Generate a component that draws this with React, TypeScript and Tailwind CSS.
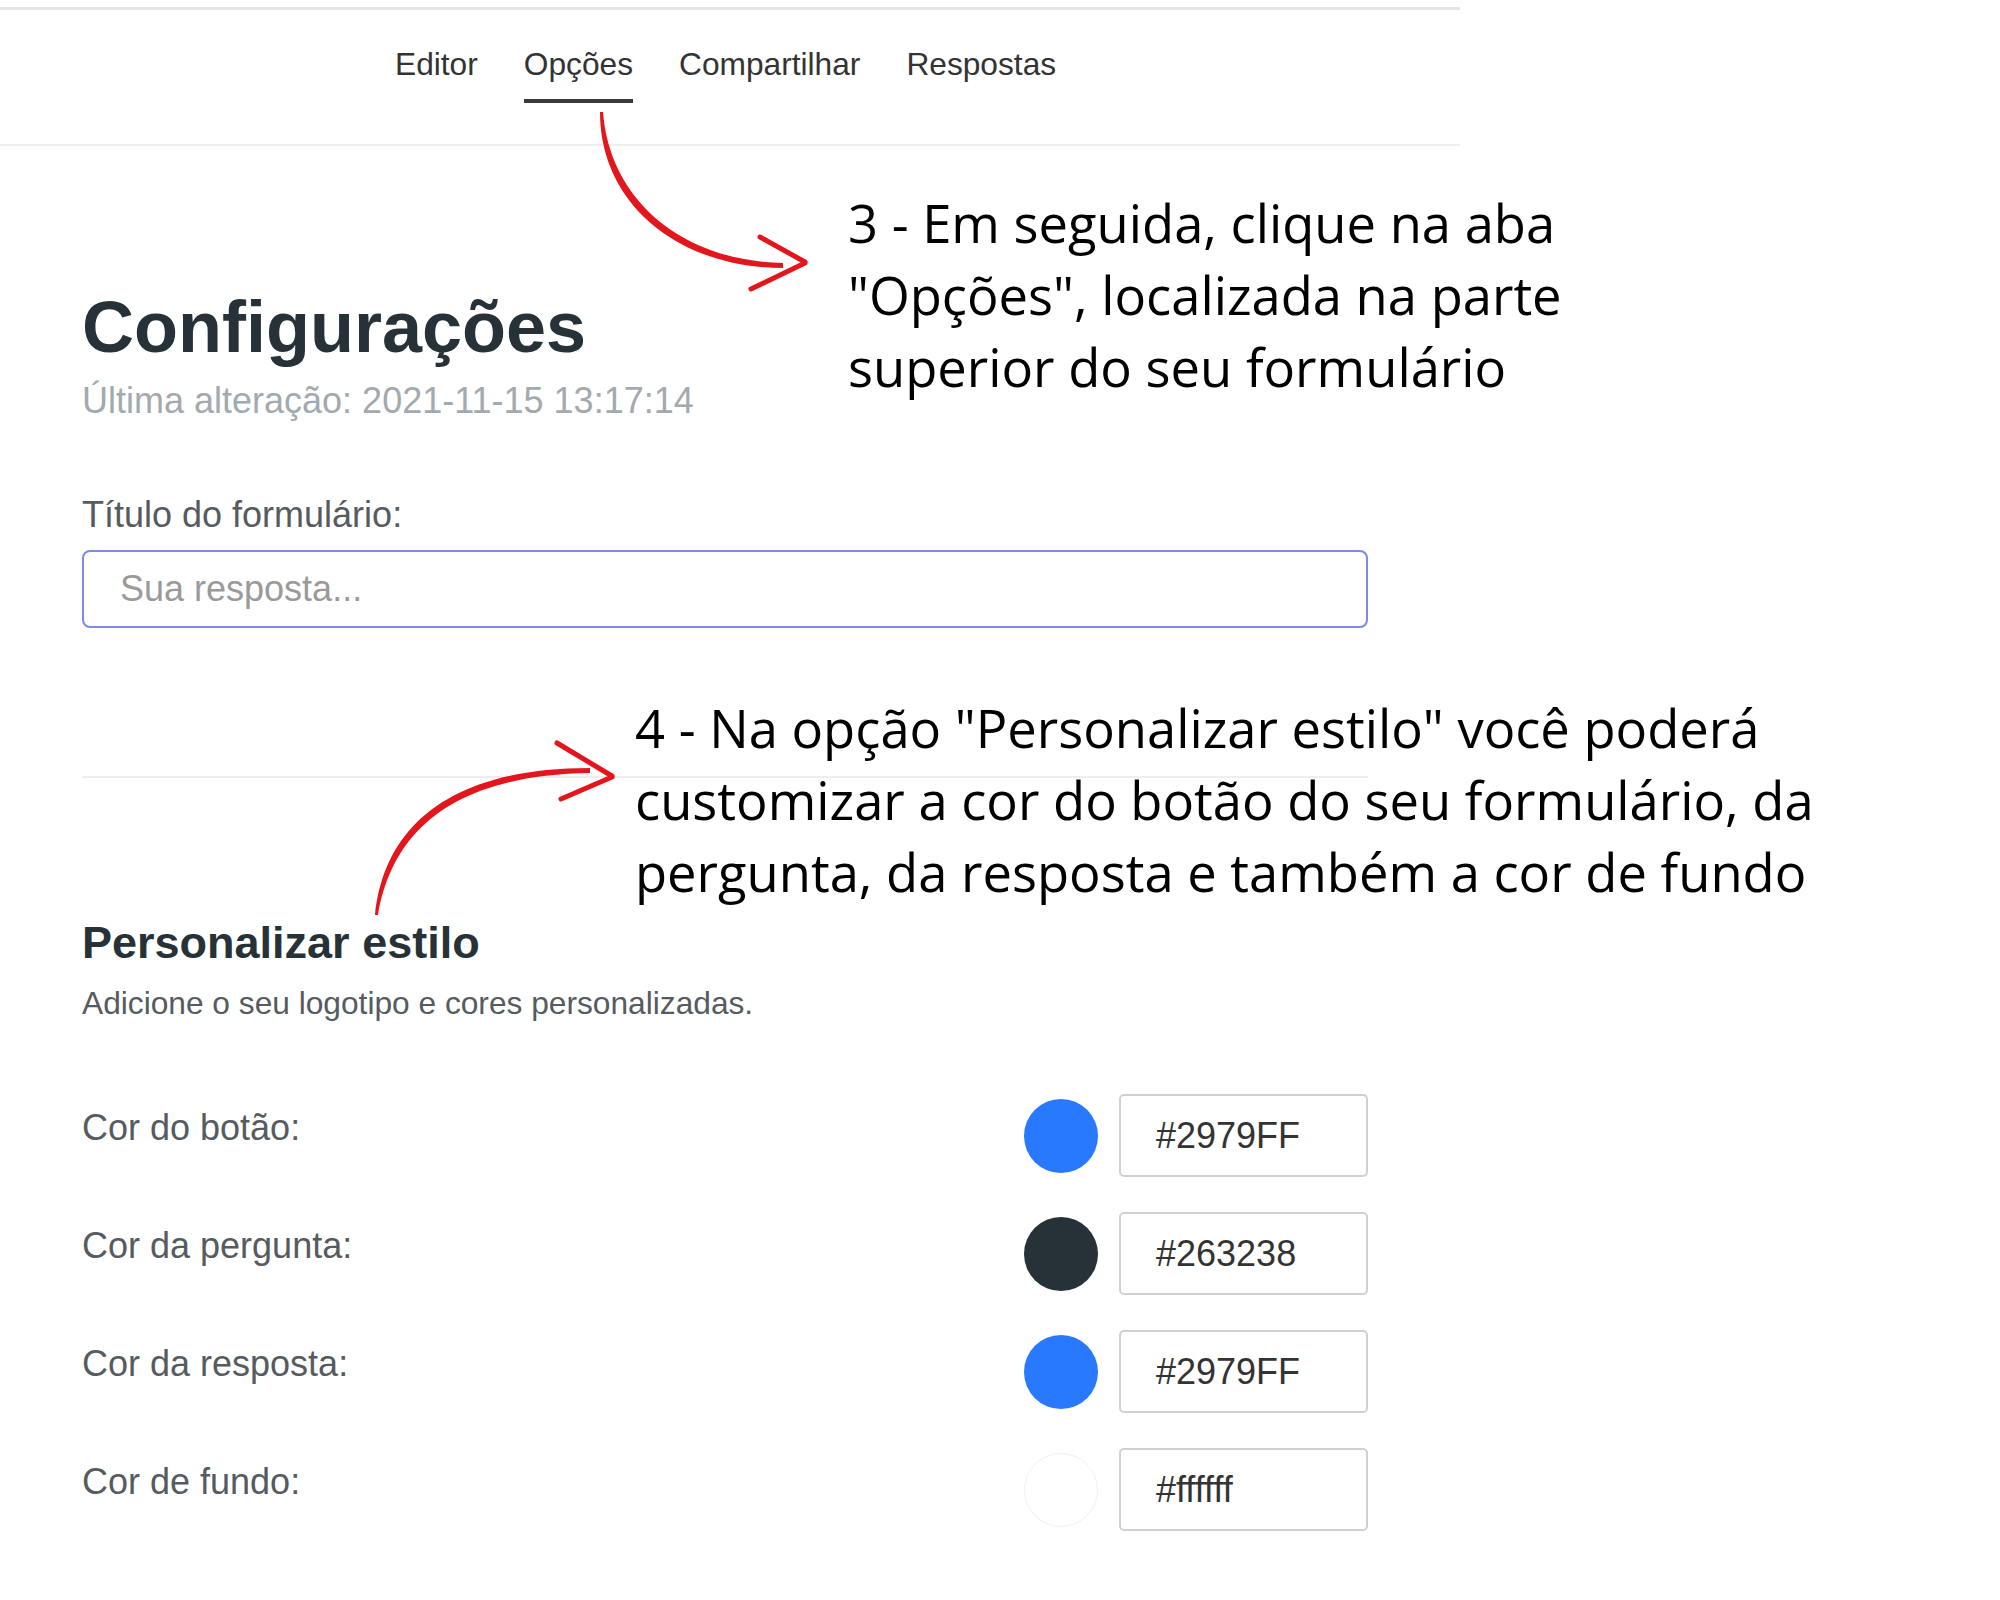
const tabs = ['Editor', 'Opções', 'Compartilhar', 'Respostas']

const colorRows = [
  { label: 'Cor do botão:', value: '#2979FF', swatch: 'bg-[#2979ff]' },
  { label: 'Cor da pergunta:', value: '#263238', swatch: 'bg-[#263238]' },
  { label: 'Cor da resposta:', value: '#2979FF', swatch: 'bg-[#2979ff]' },
  { label: 'Cor de fundo:', value: '#ffffff', swatch: 'bg-white border border-[#f1f1f1]' },
]

const RED = '#e3161d'

// hand drawn arrows that sit on top of the form
const Arrows = () => (
  <svg
    className="pointer-events-none absolute left-0 top-0"
    width="2000"
    height="1600"
    viewBox="0 0 2000 1600"
  >
    {/* arrow 3: from the tab down to the first note */}
    <path
      d="M600,112 C600,205 680,268 783,268 L783,263 C684,261 610,202 603,112 Z"
      fill={RED}
    />
    <path d="M760,237 L805,262" stroke={RED} strokeWidth="5" strokeLinecap="round" fill="none" />
    <path d="M751,289 L805,263" stroke={RED} strokeWidth="5" strokeLinecap="round" fill="none" />

    {/* arrow 4: from the section title up to the second note */}
    <path
      d="M375,915 C384,828 448,768 590,768 L590,773 C452,775 392,832 378,915 Z"
      fill={RED}
    />
    <path d="M557,743 L612,776" stroke={RED} strokeWidth="5" strokeLinecap="round" fill="none" />
    <path d="M561,799 L612,777" stroke={RED} strokeWidth="5" strokeLinecap="round" fill="none" />
  </svg>
)

export default function App() {
  return (
    <div className="relative h-[1600px] w-[2000px] overflow-hidden bg-white font-['Liberation_Sans',Arial,sans-serif]">
      <header className="mt-[7px] w-[1460px] border-t-[3px] border-b-2 border-t-[#e4e4e4] border-b-[#efefef]">
        <nav className="flex h-[134px] items-start gap-[46px] pl-[395px] pt-[36px]">
          {tabs.map((tab) => (
            <a
              key={tab}
              className={
                tab === 'Opções'
                  ? 'block border-b-4 border-[#3a3a3a] pb-[16px] text-[31.7px] leading-[37px] text-[#333]'
                  : 'block pb-[16px] text-[31.7px] leading-[37px] text-[#333]'
              }
            >
              {tab}
            </a>
          ))}
        </nav>
      </header>

      <main className="w-[1368px] pl-[82px]">
        <h1 className="mt-[145px] text-[72px] font-bold leading-none text-[#263238]">
          Configurações
        </h1>
        <p className="mt-[17px] text-[36px] leading-[41px] text-[#a2a9af]">
          Última alteração: 2021-11-15 13:17:14
        </p>

        <label className="mt-[73px] block text-[36px] leading-[41px] text-[#555b60]">
          Título do formulário:
        </label>
        <div className="mt-[15px] flex h-[78px] items-center rounded-lg border-2 border-[#7b8be6] pl-[36px] text-[36px] text-[#9a9a9a]">
          Sua resposta...
        </div>

        <div className="mt-[148px] h-[2px] bg-[#eeeeee]" />

        <h2 className="mt-[140px] text-[45px] font-bold leading-[50px] text-[#263238]">
          Personalizar estilo
        </h2>
        <p className="mt-[17px] text-[31.7px] leading-[37px] text-[#555b60]">
          Adicione o seu logotipo e cores personalizadas.
        </p>

        <div className="mt-[72px] flex flex-col gap-[35px]">
          {colorRows.map((row) => (
            <div key={row.label} className="flex h-[83px] items-center">
              <span className="-mt-[16px] flex-1 text-[36px] leading-[41px] text-[#555b60]">
                {row.label}
              </span>
              <span className={`h-[74px] w-[74px] rounded-full ${row.swatch}`} />
              <div className="ml-[21px] flex h-[83px] w-[249px] items-center rounded-[5px] border-2 border-[#d0d0d0] pl-[35px] text-[36px] text-[#333]">
                {row.value}
              </div>
            </div>
          ))}
        </div>
      </main>

      <p className="absolute left-[848px] top-[187px] font-['Open_Sans',sans-serif] text-[52.5px] leading-[72px] text-black">
        3 - Em seguida, clique na aba
        <br />
        "Opções", localizada na parte
        <br />
        superior do seu formulário
      </p>

      <p className="absolute left-[635px] top-[692px] font-['Open_Sans',sans-serif] text-[52.5px] leading-[72px] text-black">
        4 - Na opção "Personalizar estilo" você poderá
        <br />
        customizar a cor do botão do seu formulário, da
        <br />
        pergunta, da resposta e também a cor de fundo
      </p>

      <Arrows />
    </div>
  )
}
